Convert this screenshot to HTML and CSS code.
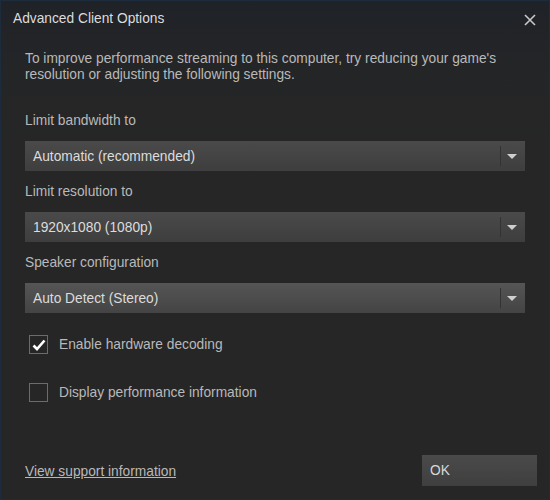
FILE: index.html
```html
<!DOCTYPE html>
<html lang="en">
<head>
    <meta charset="UTF-8">
    <title>Advanced Client Options</title>
    <link rel="stylesheet" href="styles.css">
</head>
<body>
    <div class="dialog">
        <div class="titlebar">
            <span class="title">Advanced Client Options</span>
            <svg class="close" width="12" height="12" viewBox="0 0 12 12">
                <path d="M1 1 L11 11 M11 1 L1 11" stroke="#c8c8c8" stroke-width="1.6" fill="none"/>
            </svg>
        </div>

        <div class="content">
            <p class="intro">To improve performance streaming to this computer, try reducing your game's resolution or adjusting the following settings.</p>

            <div class="field">
                <label>Limit bandwidth to</label>
                <div class="dropdown">
                    <span class="value">Automatic (recommended)</span>
                    <span class="arrow"></span>
                </div>
            </div>

            <div class="field">
                <label>Limit resolution to</label>
                <div class="dropdown">
                    <span class="value">1920x1080 (1080p)</span>
                    <span class="arrow"></span>
                </div>
            </div>

            <div class="field">
                <label>Speaker configuration</label>
                <div class="dropdown hover">
                    <span class="value">Auto Detect (Stereo)</span>
                    <span class="arrow"></span>
                </div>
            </div>

            <div class="checks">
                <div class="check">
                    <span class="box">
                        <svg width="14" height="12" viewBox="0 0 14 12">
                            <path d="M1.5 6.5 L5 10 L12.5 1.5" stroke="#fff" stroke-width="2.6" fill="none"/>
                        </svg>
                    </span>
                    <span>Enable hardware decoding</span>
                </div>
                <div class="check">
                    <span class="box"></span>
                    <span>Display performance information</span>
                </div>
            </div>
        </div>

        <div class="footer">
            <a class="support" href="#">View support information</a>
            <button class="ok-btn">OK</button>
        </div>
    </div>
</body>
</html>
```

FILE: styles.css
```css
html, body {
    margin: 0;
    height: 100%;
}
body {
    font-family: "Liberation Sans", Arial, sans-serif;
    font-size: 13.75px;
    background: #262626;
}
.dialog {
    box-sizing: border-box;
    width: 550px;
    height: 500px;
    border: 1px solid #1d2c3c;
    background: linear-gradient(#1f2227 0px, #242527 60px, #262626 140px);
    display: flex;
    flex-direction: column;
}
.titlebar {
    display: flex;
    align-items: center;
    justify-content: space-between;
    height: 35px;
    padding: 0 13px 0 12px;
}
.title {
    color: #dcdcdc;
}
.close {
    margin-top: 2px;
}
.content {
    padding: 0 24px;
    flex: 1;
}
.intro {
    margin: 15px 0 0;
    color: #b9b9b9;
    line-height: 16px;
}
.field {
    margin-top: 30px;
}
.field + .field {
    margin-top: 13px;
}
.field label {
    display: block;
    color: #b9b9b9;
    margin-bottom: 13px;
    line-height: 15px;
}
.dropdown {
    display: flex;
    align-items: center;
    height: 30px;
    background: linear-gradient(#4a4a4a, #3e3e3e);
    color: #dcdcdc;
}
.dropdown.hover {
    background: linear-gradient(#555555, #444444);
}
.dropdown .value {
    flex: 1;
    padding-left: 8px;
}
.dropdown .arrow {
    position: relative;
    width: 24px;
    height: 20px;
    border-left: 1px solid #333;
}
.dropdown .arrow::after {
    content: "";
    position: absolute;
    left: 6px;
    top: 8px;
    border-left: 5px solid transparent;
    border-right: 5px solid transparent;
    border-top: 5px solid #cfcfcf;
}
.checks {
    margin-top: 22px;
    padding-left: 4px;
    display: flex;
    flex-direction: column;
    gap: 29px;
}
.check {
    display: flex;
    align-items: center;
    gap: 11px;
    color: #b9b9b9;
}
.box {
    box-sizing: border-box;
    width: 19px;
    height: 19px;
    border: 1px solid #6c6c6c;
    display: flex;
    align-items: center;
    justify-content: center;
}
.footer {
    display: flex;
    align-items: center;
    justify-content: space-between;
    padding: 0 12px 13px 24px;
}
.support {
    color: #b9b9b9;
    text-decoration: underline;
    margin-top: 1px;
}
.ok-btn {
    width: 115px;
    height: 31px;
    border: none;
    background: linear-gradient(#4a4a4a, #3f3f3f);
    color: #d8d8d8;
    font-family: inherit;
    font-size: 13.75px;
    text-align: left;
    padding-left: 8px;
}
```
